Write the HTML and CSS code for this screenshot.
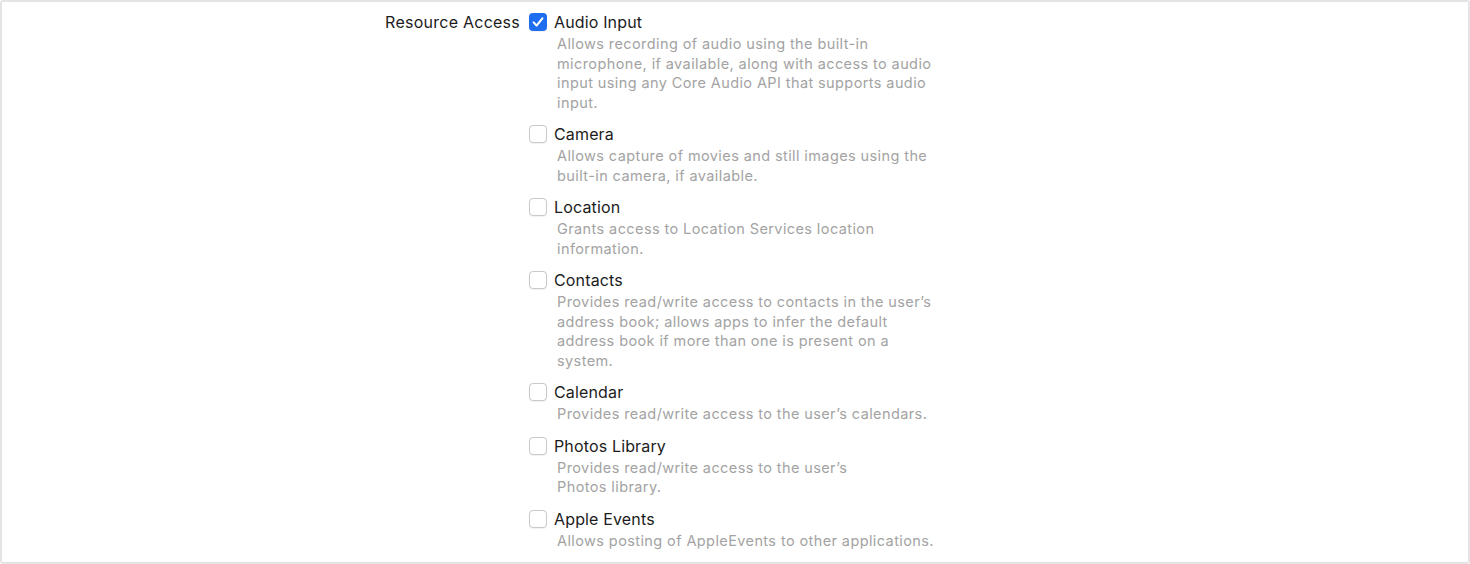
FILE: index.html
```html
<!DOCTYPE html>
<html lang="en">
<head>
<meta charset="utf-8">
<title>Resource Access</title>
<link rel="stylesheet" href="styles.css">
</head>
<body>
<div class="frame">
  <div class="setting">
    <div class="label">Resource Access</div>
    <div class="options">
      <div class="option">
        <div class="head">
          <span class="box checked"><svg viewBox="0 0 18 18" width="18" height="18"><path d="M4.6 9.4 L7.6 12.6 L13.4 5.4" fill="none" stroke="#fff" stroke-width="2.1" stroke-linecap="round" stroke-linejoin="round"/></svg></span>
          <span class="title">Audio Input</span>
        </div>
        <div class="desc">Allows recording of audio using the built-in<br>microphone, if available, along with access to audio<br>input using any Core Audio API that supports audio<br>input.</div>
      </div>
      <div class="option">
        <div class="head"><span class="box"></span><span class="title">Camera</span></div>
        <div class="desc">Allows capture of movies and still images using the<br>built-in camera, if available.</div>
      </div>
      <div class="option">
        <div class="head"><span class="box"></span><span class="title">Location</span></div>
        <div class="desc">Grants access to Location Services location<br>information.</div>
      </div>
      <div class="option">
        <div class="head"><span class="box"></span><span class="title">Contacts</span></div>
        <div class="desc">Provides read/write access to contacts in the user’s<br>address book; allows apps to infer the default<br>address book if more than one is present on a<br>system.</div>
      </div>
      <div class="option">
        <div class="head"><span class="box"></span><span class="title">Calendar</span></div>
        <div class="desc">Provides read/write access to the user’s calendars.</div>
      </div>
      <div class="option">
        <div class="head"><span class="box"></span><span class="title">Photos Library</span></div>
        <div class="desc">Provides read/write access to the user’s<br>Photos library.</div>
      </div>
      <div class="option">
        <div class="head"><span class="box"></span><span class="title">Apple Events</span></div>
        <div class="desc">Allows posting of AppleEvents to other applications.</div>
      </div>
    </div>
  </div>
</div>
</body>
</html>
```

FILE: styles.css
```css
html, body {
  margin: 0;
  padding: 0;
  background: #ffffff;
}

body {
  font-family: Inter, "Noto Sans", "Liberation Sans", sans-serif;
  color: #1c1c1c;
}

.frame {
  box-sizing: border-box;
  width: 1470px;
  height: 564px;
  border: 2px solid #e4e4e4;
  border-radius: 3px;
  padding-top: 10px;
  overflow: hidden;
}

.setting {
  display: flex;
  align-items: flex-start;
}

.label {
  width: 518px;
  box-sizing: border-box;
  text-align: right;
  font-size: 16px;
  line-height: 20px;
  letter-spacing: 0.25px;
}

.options {
  display: flex;
  flex-direction: column;
  gap: 12px;
  margin-left: 9px;
}

.head {
  display: flex;
  align-items: center;
  gap: 7px;
  height: 20px;
}

.box {
  box-sizing: border-box;
  width: 18px;
  height: 18px;
  border: 1px solid #c9c9c9;
  border-radius: 4px;
  background: #fff;
  box-shadow: 0 0.5px 1px rgba(0, 0, 0, 0.06);
  display: inline-flex;
}

.box.checked {
  border: none;
  background: #1f6ef0;
}

.box svg {
  display: block;
}

.title {
  font-size: 16px;
  line-height: 20px;
  letter-spacing: 0.15px;
}

.desc {
  margin-top: 2px;
  margin-left: 28px;
  font-size: 14.5px;
  line-height: 19.5px;
  color: #a3a3a3;
  letter-spacing: 0.4px;
  white-space: nowrap;
}
```
